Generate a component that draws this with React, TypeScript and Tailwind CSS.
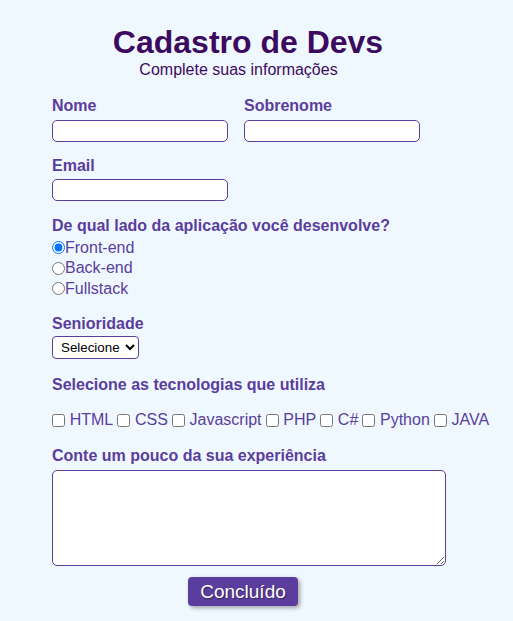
import React from "react";

const labelCls = "block text-[16px] font-bold leading-[18px] text-[#5a3d9d]";
const inputCls = "block h-[22px] w-[176px] rounded-[5px] border border-[#5a3d9d] bg-white";

export default function App() {
  const techs = ["HTML", "CSS", "Javascript", "PHP", "C#", "Python", "JAVA"];
  return (
    <div className="min-h-screen bg-[#f0f8ff] font-['Liberation_Sans',Arial,sans-serif] pt-[24px]">
      <div className="w-[496px] text-center text-[32px] font-bold leading-[37px] text-[#3c0a5e]">
        Cadastro de Devs
      </div>
      <div className="w-[477px] text-center text-[16px] leading-[18.4px] text-[#3c0a5e]">
        Complete suas informações
      </div>
      <form className="mt-[17.6px] pl-[52px]" onSubmit={(e) => e.preventDefault()}>
        <div className="flex gap-[16px]">
          <div>
            <label className={labelCls}>Nome</label>
            <input type="text" className={"mt-[5px] " + inputCls} />
          </div>
          <div>
            <label className={labelCls}>Sobrenome</label>
            <input type="text" className={"mt-[5px] " + inputCls} />
          </div>
        </div>
        <div className="mt-[15px]">
          <label className={labelCls}>Email</label>
          <input type="email" className={"mt-[4px] " + inputCls} />
        </div>
        <div className="mt-[16px]">
          <label className={labelCls}>De qual lado da aplicação você desenvolve?</label>
          <div className="mt-[2.5px]">
            {["Front-end", "Back-end", "Fullstack"].map((t, i) => (
              <div key={t} className="flex h-[20.5px] items-center text-[16px] leading-[18px] text-[#5a3d9d]">
                <input type="radio" name="lado" defaultChecked={i === 0} className="m-0 h-[13px] w-[13px]" />
                <span>{t}</span>
              </div>
            ))}
          </div>
        </div>
        <div className="mt-[15.5px]">
          <label className={labelCls}>Senioridade</label>
          <select className="mt-[3.5px] block h-[23px] w-[87px] rounded-[4px] border border-[#5a3d9d] bg-white pl-[4px] text-[13.33px] text-black">
            <option>Selecione</option>
            <option>Júnior</option>
            <option>Pleno</option>
            <option>Sênior</option>
          </select>
        </div>
        <div className="mt-[16.5px]">
          <label className={labelCls}>Selecione as tecnologias que utiliza</label>
          <div className="mt-[17.5px] flex h-[18.4px] items-center gap-[4px] text-[16px] leading-[18.4px] text-[#5a3d9d]">
            {techs.map((t) => (
              <div key={t} className="flex items-center">
                <input type="checkbox" className="m-0 h-[13px] w-[13px]" />
                <span className="ml-[4.7px]">{t}</span>
              </div>
            ))}
          </div>
        </div>
        <div className="mt-[18px]">
          <label className={labelCls}>Conte um pouco da sua experiência</label>
          <textarea className="mt-[4.6px] block h-[96.5px] w-[394px] rounded-[5px] border border-[#5a3d9d] bg-white" />
        </div>
        <button
          type="submit"
          className="ml-[136px] mt-[10.5px] block h-[29px] w-[110px] rounded-[4px] bg-[#5a3d9d] text-[19px] leading-[29px] text-white shadow-[2px_2px_4px_rgba(0,0,0,0.35)] [text-shadow:1px_1px_1px_rgba(0,0,0,0.4)]"
        >
          Concluído
        </button>
      </form>
    </div>
  );
}
